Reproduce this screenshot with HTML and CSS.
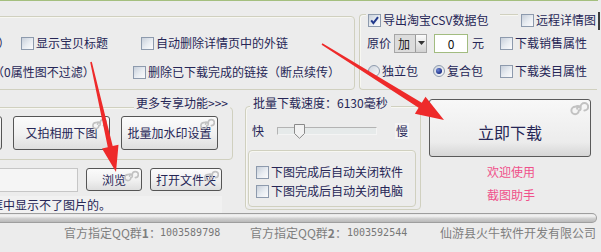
FILE: index.html
```html
<!DOCTYPE html>
<html lang="zh-CN">
<head>
<meta charset="utf-8">
<title>截图助手</title>
<link rel="stylesheet" href="styles.css">
</head>
<body>
<div class="page">
  <div class="topline"></div>

  <div class="rowA">
    <div class="gbox opts">
      <div class="line">
        <span class="cut1">）</span>
        <div class="chk w120"><span class="box"></span><span>显示宝贝标题</span></div>
        <div class="chk"><span class="box"></span><span>自动删除详情页中的外链</span></div>
      </div>
      <div class="line second">
        <span class="cut2">（0属性图不过滤）</span>
        <div class="chk"><span class="box"></span><span>删除已下载完成的链接（断点续传）</span></div>
      </div>
    </div>

    <div class="gbox csv">
      <div class="legend">
        <div class="lg lg1"><span class="box"><svg class="tick" viewBox="0 0 11 11" width="11" height="11"><path d="M2.2 5.4 L4.4 8.2 L9 2.2" /></svg></span><span>导出淘宝CSV数据包</span></div>
        <div class="lg lg2"><span class="box"></span><span>远程详情图</span></div>
      </div>
      <div class="csvgrid">
        <div class="price">
          <span>原价</span>
          <div class="combo"><span class="ctext">加</span><span class="carrow"><svg viewBox="0 0 7 4" width="7" height="4"><path d="M0 0 H7 L3.5 4 Z"/></svg></span></div>
          <div class="num">0</div>
          <span class="yuan">元</span>
        </div>
        <div class="chk"><span class="box"></span><span>下载销售属性</span></div>
        <div class="radios">
          <div class="chk"><span class="radio"></span><span>独立包</span></div>
          <div class="chk r2"><span class="radio on"></span><span>复合包</span></div>
        </div>
        <div class="chk"><span class="box"></span><span>下载类目属性</span></div>
      </div>
    </div>
    <div class="edge"></div>
  </div>

  <div class="rowB">
    <div class="leftcol">
      <div class="gbox more">
        <div class="legend right"><span class="lg lg3">更多专享功能&gt;&gt;&gt;</span></div>
        <div class="btnrow">
          <div class="btn b0"></div>
          <div class="btn b1">又拍相册下图<svg class="swirl" viewBox="0 0 16 12" width="16" height="12"><path d="M6.5 6.2a1.4 1.4 0 1 1 1.4 1.4 a3 3 0 1 1 -3 -3 a4.4 4.4 0 0 1 4.4 0 a3 3 0 1 1 3 3"/></svg></div>
          <div class="btn b1">批量加水印设置<svg class="swirl" viewBox="0 0 16 12" width="16" height="12"><path d="M6.5 6.2a1.4 1.4 0 1 1 1.4 1.4 a3 3 0 1 1 -3 -3 a4.4 4.4 0 0 1 4.4 0 a3 3 0 1 1 3 3"/></svg></div>
        </div>
      </div>
      <div class="pathrow">
        <div class="pathinput"></div>
        <div class="btn b2">浏览<svg class="swirl" viewBox="0 0 16 12" width="16" height="12"><path d="M6.5 6.2a1.4 1.4 0 1 1 1.4 1.4 a3 3 0 1 1 -3 -3 a4.4 4.4 0 0 1 4.4 0 a3 3 0 1 1 3 3"/></svg></div>
        <div class="btn b3">打开文件夹<svg class="swirl" viewBox="0 0 16 12" width="16" height="12"><path d="M6.5 6.2a1.4 1.4 0 1 1 1.4 1.4 a3 3 0 1 1 -3 -3 a4.4 4.4 0 0 1 4.4 0 a3 3 0 1 1 3 3"/></svg></div>
      </div>
      <div class="hint"><span class="cut3">框中显示不了图片的。</span></div>
    </div>

    <div class="gbox speed">
      <div class="legend"><span class="lg lg4">批量下载速度：6130毫秒</span></div>
      <div class="slider">
        <span class="fast">快</span>
        <div class="track"><svg class="thumb" viewBox="0 0 11 15" width="11" height="15"><path d="M0.5 0.5 H10.5 V9.5 L5.5 14.3 L0.5 9.5 Z"/></svg></div>
        <span class="slow">慢</span>
      </div>
      <div class="gbox inner">
        <div class="chk irow"><span class="box"></span><span>下图完成后自动关闭软件</span></div>
        <div class="chk irow r2row"><span class="box"></span><span>下图完成后自动关闭电脑</span></div>
      </div>
    </div>

    <div class="rightcol">
      <div class="btn big">立即下载<svg class="swirl bigswirl" viewBox="0 0 16 12" width="20" height="15"><path d="M6.5 6.2a1.4 1.4 0 1 1 1.4 1.4 a3 3 0 1 1 -3 -3 a4.4 4.4 0 0 1 4.4 0 a3 3 0 1 1 3 3"/></svg></div>
      <div class="pink">欢迎使用</div>
      <div class="pink">截图助手</div>
    </div>
  </div>

  <div class="statusbar"></div>

  <div class="footer">
    <span class="flabel f1">官方指定QQ群<b>1</b>：</span><span class="digits">1003589798</span>
    <span class="flabel f2">官方指定QQ群<b>2</b>：</span><span class="digits">1003592544</span>
    <span class="company">仙游县火牛软件开发有限公司</span>
  </div>

  <svg class="arrows" viewBox="0 0 601 252" width="601" height="252">
    <polygon points="90.2,62.2 107.8,147.2 102,148.5 116,172 118.5,144.8 112.7,146.1 91.8,61.8" />
    <polygon points="321.6,44.7 418.6,107.7 414.9,113.7 444,120 425.5,96.7 421.8,102.7 322.4,43.3" />
  </svg>
</div>
</body>
</html>
```

FILE: styles.css
```css
* { box-sizing: border-box; }
html, body { margin: 0; padding: 0; }
body {
  width: 601px;
  height: 252px;
  overflow: hidden;
  background: #ececec;
  font-family: "Noto Sans CJK SC", "Noto Sans", sans-serif;
  font-size: 12px;
  line-height: 16px;
  color: #262656;
}
.page {
  position: relative;
  width: 601px;
  height: 252px;
  overflow: hidden;
}
.topline { width: 598px; height: 1px; background: #a4bf7e; }

/* group boxes */
.gbox {
  border: 1px solid #d0d0bf;
  border-radius: 4px;
  box-shadow: inset 1px 1px 0 #f7f7f2;
  flex-shrink: 0;
}
.legend { display: flex; align-items: center; height: 16px; white-space: nowrap; }
.lg { background: #ececec; display: flex; align-items: center; gap: 2px; white-space: nowrap; }

/* check boxes & radios */
.chk { display: flex; align-items: center; gap: 2px; white-space: nowrap; flex-shrink: 0; }
.box {
  width: 13px; height: 13px;
  border: 1px solid #8d9aad;
  background: linear-gradient(135deg, #c8d0db 0%, #e9edf2 55%, #fbfbfc 100%);
  display: flex; align-items: center; justify-content: center;
  flex-shrink: 0;
}
.tick path { fill: none; stroke: #22398c; stroke-width: 2; }
.radio {
  width: 12px; height: 12px; border-radius: 50%;
  border: 1px solid #8d9aad;
  background: linear-gradient(135deg, #cdd4de, #fafafa);
  display: flex; align-items: center; justify-content: center;
  flex-shrink: 0;
}
.radio.on::after {
  content: ""; width: 6px; height: 6px; border-radius: 50%;
  background: radial-gradient(circle at 35% 35%, #6f86d6, #1c2f86 70%);
}

/* row A */
.rowA { display: flex; align-items: flex-start; margin-top: 13px; }
.opts {
  margin-left: -10px; margin-top: 2px;
  width: 365px; height: 74px;
  padding: 18px 0 0 9px;
}
.line { display: flex; align-items: center; height: 16px; white-space: nowrap; }
.line.second { margin-top: 13px; }
.cut1 { margin-left: -2px; width: 23px; flex-shrink: 0; }
.w120 { width: 120px; }
.cut2 { margin-left: -8px; width: 141px; flex-shrink: 0; }

.csv {
  margin-left: 4px;
  width: 238px; height: 76px;
  border-right: none;
  border-radius: 4px 0 0 4px;
}
.csv .legend { margin-top: -3px; }
.lg1 { margin-left: 6px; padding: 0 12px 0 2px; }
.lg2 { margin-left: auto; padding: 0 1px 0 3px; }
.csvgrid {
  display: grid;
  grid-template-columns: 133px auto;
  grid-template-rows: 20px 16px;
  row-gap: 10px;
  align-items: center;
  padding-left: 7px;
  margin-top: 5px;
}
.price { display: flex; align-items: center; height: 20px; white-space: nowrap; }
.combo {
  margin-left: 3px; width: 33px; height: 19px;
  display: flex; border: 1px solid #a6a6a6;
  background: #dcdcdc;
}
.ctext { flex: 1; padding-left: 3px; line-height: 17px; color: #202020; }
.carrow {
  width: 11px; border-left: 1px solid #9a9a9a;
  background: linear-gradient(#fbfbfb, #d2d2d2);
  display: flex; align-items: center; justify-content: center;
}
.carrow path { fill: #333; }
.num {
  margin-left: 7px; width: 34px; height: 19px;
  border: 1px solid #a2bc80; background: #fff;
  text-align: center; line-height: 17px; color: #111;
}
.yuan { margin-left: 4px; }
.radios { display: flex; align-items: center; height: 16px; padding-left: 1px; }
.radios .r2 { margin-left: 15px; }
.edge { width: 2px; height: 18px; margin: -2px 0 0 1px; background: #3c3c3c; flex-shrink: 0; }

/* buttons */
.btn {
  position: relative;
  flex-shrink: 0;
  border: 1px solid #555;
  border-radius: 3px;
  background: linear-gradient(#fbfbfb 0%, #f0f0f0 55%, #dedede 100%);
  display: flex; align-items: center; justify-content: center;
  white-space: nowrap;
  color: #262656;
}
.swirl { position: absolute; top: 1px; right: 2px; }
.swirl path { fill: none; stroke: #c2c2c2; stroke-width: 1.6; stroke-linecap: round; }

/* row B */
.rowB { display: flex; align-items: flex-start; margin-top: 7px; }
.leftcol { margin-left: -10px; width: 243px; display: flex; flex-direction: column; flex-shrink: 0; }
.more { margin-top: 10px; width: 243px; height: 53px; }
.more .legend { margin-top: -12px; height: 14px; justify-content: flex-end; padding-right: 2px; }
.lg3 { padding: 0 2px; line-height: 14px; }
.btnrow { display: flex; margin-top: 6px; }
.btnrow .b0 { width: 11px; height: 34px; }
.btnrow .b1 { margin-left: 11px; width: 97px; height: 34px; }
.pathrow { display: flex; align-items: flex-start; margin-top: 8px; }
.pathinput { width: 88px; height: 24px; border: 1px solid #c6c6c6; background: #f5f5f5; flex-shrink: 0; }
.b2 { margin-left: 8px; width: 56px; height: 23px; }
.b3 { margin-left: 8px; width: 72px; height: 23px; }
.hint {
  margin: 4px 0 0 10px; width: 222px; height: 17px;
  line-height: 17px; background: #f1f1f1; white-space: nowrap;
}
.cut3 { margin-left: -9px; }

.speed { margin: 9px 0 0 12px; width: 176px; height: 104px; }
.speed .legend { margin-top: -11px; height: 14px; }
.lg4 { margin-left: 4px; padding: 0 3px; line-height: 14px; }
.slider { display: flex; align-items: center; height: 20px; margin-top: 11px; padding-left: 6px; }
.fast { width: 12px; }
.track {
  position: relative;
  margin-left: 13px; width: 100px; height: 8px;
  border: 1px solid #b3b3b3; border-right-color: #f4f4f4; border-bottom-color: #f4f4f4;
  background: #e6eaea;
}
.thumb { position: absolute; left: 16px; top: -4px; }
.thumb path { fill: #f2f2f2; stroke: #8a8a8a; stroke-width: 1; }
.slow { margin-left: 18px; background: #f3f3f3; padding: 0 1px; }
.inner { margin: 9px 0 0 2px; width: 168px; height: 57px; padding: 13px 0 0 7px; }
.irow { height: 16px; }
.r2row { margin-top: 3px; }

.rightcol { margin: 2px 0 0 8px; width: 162px; flex-shrink: 0; }
.big {
  width: 162px; height: 58px;
  font-size: 16px; padding-top: 8px;
  border-color: #5a5a5a;
  background: linear-gradient(#f8f8f8 0%, #ececec 75%, #d6d6d6 100%);
}
.bigswirl { top: 1px; right: 1px; }
.pink { margin: 7px 0 0 58px; height: 16px; color: #f0508a; }

.statusbar {
  width: 597px; height: 10px;
  border: 1px solid #9e9e9e; border-left: none;
  border-radius: 0 5px 5px 0;
  background: linear-gradient(#e6e6e6 0%, #f3f3f3 25%, #cdcdcd 60%, #b9b9b9 100%);
}

.footer { display: flex; align-items: center; height: 16px; margin-top: 2px; white-space: nowrap; color: #7e7e7e; }
.flabel { flex-shrink: 0; }
.flabel b { font-weight: bold; }
.f1 { margin-left: 64px; width: 96px; }
.f2 { margin-left: 30px; width: 97px; }
.digits { font-family: "DejaVu Sans Mono", monospace; font-size: 10px; width: 60px; color: #777; }
.company { margin-left: 33px; }

.arrows { position: absolute; left: 0; top: 0; pointer-events: none; }
.arrows polygon { fill: #ee2a2a; }
```
